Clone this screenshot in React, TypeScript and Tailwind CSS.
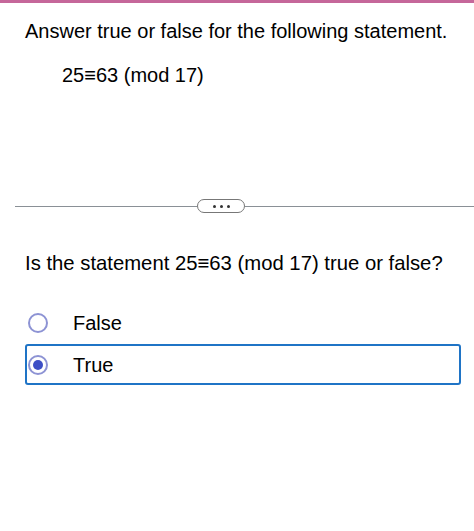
import React from "react";

const Radio = ({ checked }: { checked: boolean }) => (
  <svg width="22" height="22" viewBox="0 0 22 22" className="shrink-0">
    <circle cx="11" cy="11" r="9" fill="white" stroke="#8d93d4" strokeWidth="2" />
    {checked && <circle cx="11" cy="11" r="5" fill="#3d4fc6" />}
  </svg>
);

export default function App() {
  return (
    <div
      className="w-[474px] h-[531px] bg-white text-black overflow-hidden"
      style={{ fontFamily: '"Liberation Sans", Arial, sans-serif' }}
    >
      <div className="h-[3px] bg-[#c5679a]" />
      <div className="pl-[25px] pt-[16px]">
        <p className="text-[20px] leading-[24px]">Answer true or false for the following statement.</p>
        <p className="text-[20px] leading-[24px] mt-[20px] pl-[37px]">25≡63 (mod 17)</p>
      </div>

      <div className="flex items-center pl-[15px] mt-[112px]">
        <div className="h-px w-[182px] bg-[#8a9096]" />
        <div className="w-[48px] h-[14px] rounded-full border border-[#777] flex items-center justify-center gap-[4px]">
          <span className="w-[3px] h-[3px] rounded-full bg-[#333]" />
          <span className="w-[3px] h-[3px] rounded-full bg-[#333]" />
          <span className="w-[3px] h-[3px] rounded-full bg-[#333]" />
        </div>
        <div className="h-px flex-1 bg-[#8a9096]" />
      </div>

      <p className="pl-[25px] mt-[38px] text-[20.3px] leading-[24px]">
        Is the statement 25≡63 (mod 17) true or false?
      </p>

      <div className="pl-[25px] pr-[13px] mt-[29px] flex flex-col gap-[2px]">
        <div className="h-[38px] flex items-center pl-[2px]">
          <Radio checked={false} />
          <span className="ml-[24px] text-[20px]">False</span>
        </div>
        <div className="h-[41px] flex items-center border-2 border-[#1f74c6] rounded-[3px]">
          <Radio checked={true} />
          <span className="ml-[24px] text-[20px]">True</span>
        </div>
      </div>
    </div>
  );
}
